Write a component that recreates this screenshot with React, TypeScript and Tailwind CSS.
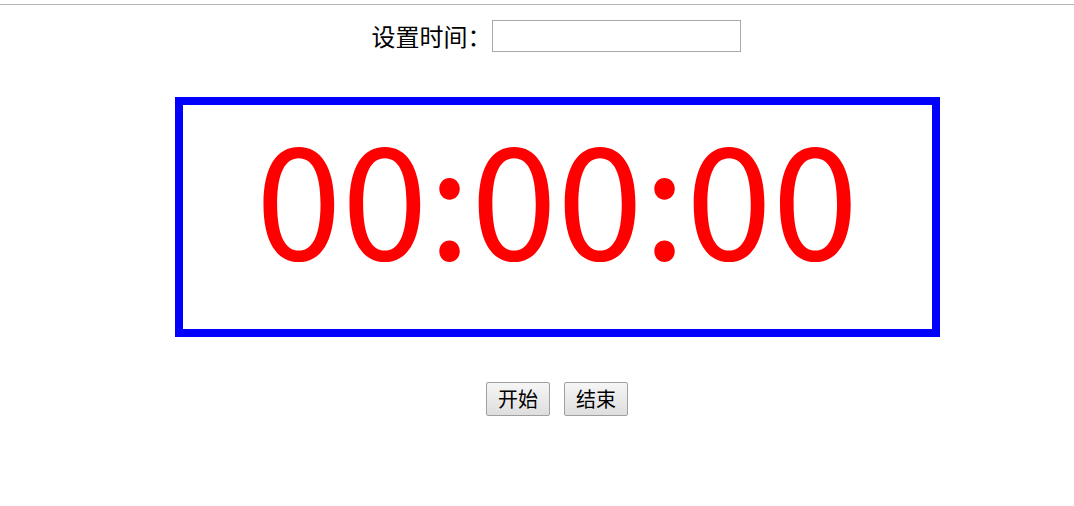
import React from "react";

export default function App() {
  return (
    <div className="w-[1074px] h-[506px] bg-white overflow-hidden" style={{ fontFamily: '"Noto Sans CJK SC", "Noto Sans", sans-serif' }}>
      <div className="h-[4px]" />
      <div className="h-px bg-[#b4b4b4]" />
      <div className="pl-[40px] flex flex-col items-center">
        <div className="mt-[15px] flex items-center h-[32px]">
          <span className="text-[24px] leading-[32px] text-black -ml-[2px]">设置时间：</span>
          <input type="text" className="w-[249px] h-[32px] border border-[#a9a9a9] bg-white outline-none" />
        </div>
        <div className="mt-[45px] w-[765px] h-[240px] border-[8px] border-[#0000ff] flex items-center justify-center">
          <span className="text-[155px] leading-none text-[#ff0000] -mt-[50px]">00:00:00</span>
        </div>
        <div className="mt-[45px] flex gap-[14px]">
          <button className="w-[64px] h-[34px] border border-[#a0a0a0] rounded-[2px] bg-gradient-to-b from-[#f6f6f6] to-[#dedede] text-[20px] leading-none text-black">开始</button>
          <button className="w-[64px] h-[34px] border border-[#a0a0a0] rounded-[2px] bg-gradient-to-b from-[#f6f6f6] to-[#dedede] text-[20px] leading-none text-black">结束</button>
        </div>
      </div>
    </div>
  );
}
